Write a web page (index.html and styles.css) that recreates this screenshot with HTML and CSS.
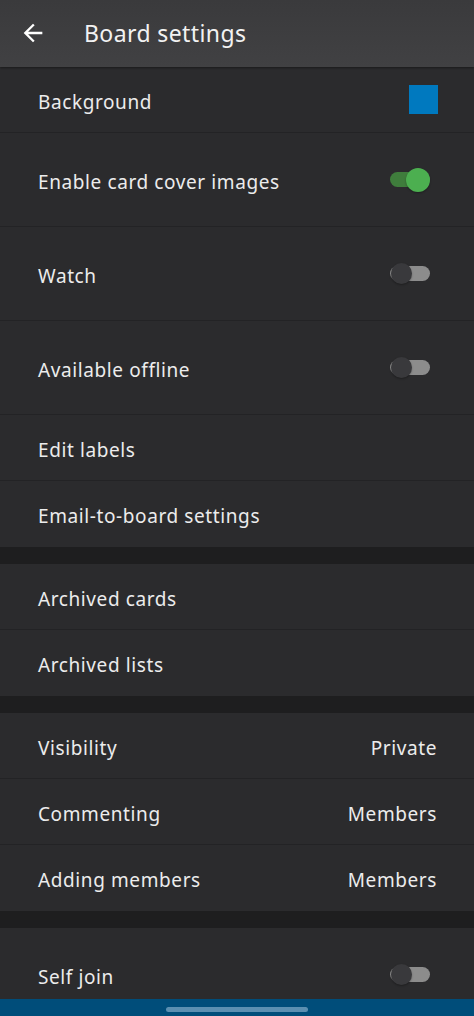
FILE: index.html
```html
<!DOCTYPE html>
<html lang="en">

<head>
  <meta charset="UTF-8">
  <meta name="viewport" content="width=device-width, initial-scale=1.0">
  <title>Board settings</title>
  <link rel="stylesheet" href="styles.css">
</head>

<body>
  <div class="toolbar">
    <button class="back" aria-label="Back">
      <svg width="28" height="28" viewBox="0 0 24 24">
        <path d="M20 11H7.83l5.59-5.59L12 4l-8 8 8 8 1.41-1.41L7.83 13H20v-2z" fill="#fff" />
      </svg>
    </button>
    <h1>Board settings</h1>
  </div>

  <div class="settings">
    <div class="group">
      <div class="row">
        <span class="label">Background</span>
        <span class="swatch"></span>
      </div>
      <div class="row tall">
        <span class="label">Enable card cover images</span>
        <span class="toggle on"></span>
      </div>
      <div class="row tall">
        <span class="label">Watch</span>
        <span class="toggle"></span>
      </div>
      <div class="row tall">
        <span class="label">Available offline</span>
        <span class="toggle"></span>
      </div>
      <div class="row">
        <span class="label">Edit labels</span>
      </div>
      <div class="row">
        <span class="label">Email-to-board settings</span>
      </div>
    </div>

    <div class="group">
      <div class="row">
        <span class="label">Archived cards</span>
      </div>
      <div class="row">
        <span class="label">Archived lists</span>
      </div>
    </div>

    <div class="group">
      <div class="row">
        <span class="label">Visibility</span>
        <span class="value">Private</span>
      </div>
      <div class="row">
        <span class="label">Commenting</span>
        <span class="value">Members</span>
      </div>
      <div class="row">
        <span class="label">Adding members</span>
        <span class="value">Members</span>
      </div>
    </div>

    <div class="group">
      <div class="row tall">
        <span class="label">Self join</span>
        <span class="toggle"></span>
      </div>
    </div>
  </div>

  <div class="nav-bar">
    <span class="handle"></span>
  </div>
</body>

</html>
```

FILE: styles.css
```css
body {
  margin: 0;
  padding: 0;
  height: 1016px;
  overflow: hidden;
  background-color: #1e1e1f;
  font-family: "Noto Sans", "Open Sans", sans-serif;
  color: #ececec;
}

.toolbar {
  display: flex;
  align-items: center;
  height: 67px;
  background: linear-gradient(#3a3a3c, #414143);
  box-shadow: 0 1px 2px rgba(0, 0, 0, 0.4);
  position: relative;
  z-index: 1;
}

.toolbar .back {
  display: flex;
  align-items: center;
  justify-content: center;
  width: 36px;
  height: 36px;
  margin: 0 0 1px 15px;
  padding: 0;
  border: none;
  background: none;
}

.toolbar h1 {
  margin: 0 0 1px 33px;
  font-size: 23px;
  font-weight: normal;
  letter-spacing: 0.4px;
  color: #f2f2f2;
}

.group {
  background-color: #2b2b2d;
  margin-bottom: 17px;
}

.row {
  display: flex;
  align-items: center;
  justify-content: space-between;
  height: 65px;
  padding: 0 37px 0 38px;
  border-bottom: 1px solid #232325;
}

.row:last-child {
  border-bottom: none;
  height: 66px;
}

.row.tall {
  height: 93px;
}

.label,
.value {
  font-size: 19px;
  letter-spacing: 0.6px;
  padding-top: 4px;
}

.swatch {
  width: 29px;
  height: 29px;
  background-color: #0079bf;
  margin-right: -1px;
}

.toggle {
  position: relative;
  width: 40px;
  height: 15px;
  border-radius: 8px;
  background-color: #8c8c8c;
  margin-right: 7px;
}

.toggle::after {
  content: "";
  position: absolute;
  top: -3px;
  left: 1px;
  width: 21px;
  height: 21px;
  border-radius: 50%;
  background-color: #39393c;
  box-shadow: 0 1px 2px rgba(0, 0, 0, 0.3);
}

.toggle.on {
  background-color: #3f7d3c;
}

.toggle.on::after {
  left: auto;
  right: 0;
  top: -4px;
  width: 24px;
  height: 24px;
  background-color: #4caf50;
}

.nav-bar {
  position: fixed;
  left: 0;
  right: 0;
  bottom: 0;
  height: 17px;
  background-color: #004d7a;
  display: flex;
  justify-content: center;
  align-items: center;
}

.handle {
  width: 142px;
  height: 5px;
  border-radius: 3px;
  background-color: #5b8fb1;
  margin-top: 3px;
}
```
